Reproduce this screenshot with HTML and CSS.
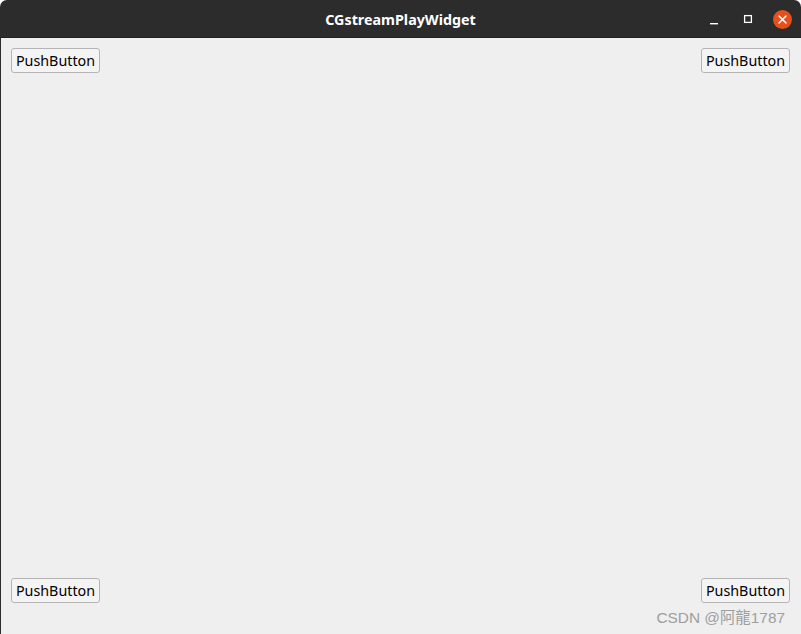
FILE: index.html
```html
<!DOCTYPE html>
<html>
<head>
<meta charset="utf-8">
<link rel="stylesheet" href="styles.css">
</head>
<body>
<div class="window">
  <div class="titlebar">
    <div class="title">CGstreamPlayWidget</div>
    <div class="controls">
      <span class="ctl min"><svg width="10" height="10" viewBox="0 0 10 10"><rect x="1" y="6" width="8" height="1.4" fill="#fff"/></svg></span>
      <span class="ctl max"><svg width="10" height="10" viewBox="0 0 10 10"><rect x="1.6" y="1.6" width="6.8" height="6.8" fill="none" stroke="#fff" stroke-width="1.3"/></svg></span>
      <span class="ctl close"><svg width="19" height="19" viewBox="0 0 19 19"><circle cx="9.5" cy="9.5" r="9.5" fill="#e5501c"/><path d="M6 6 L13 13 M13 6 L6 13" stroke="#fff" stroke-width="1.5" stroke-linecap="round"/></svg></span>
    </div>
  </div>
  <div class="content">
    <div class="row">
      <button class="push">PushButton</button>
      <button class="push">PushButton</button>
    </div>
    <div class="row">
      <button class="push">PushButton</button>
      <button class="push">PushButton</button>
    </div>
    <div class="watermark">CSDN @阿龍1787</div>
  </div>
</div>
</body>
</html>
```
FILE: styles.css
```css
html, body {
  margin: 0;
  padding: 0;
  background: #ffffff;
}
.window {
  width: 801px;
  height: 634px;
  display: flex;
  flex-direction: column;
  border-radius: 7px 7px 0 0;
  overflow: hidden;
  background: #efefef;
  font-family: "Noto Sans", "DejaVu Sans", sans-serif;
}
.titlebar {
  height: 38px;
  flex: none;
  background: #2c2c2c;
  border-bottom: 1px solid #222;
  box-sizing: border-box;
  display: flex;
  align-items: center;
  justify-content: center;
  position: relative;
}
.title {
  color: #ffffff;
  font-weight: bold;
  font-size: 14.3px;
  letter-spacing: 0;
  margin-top: 1px;
}
.controls {
  position: absolute;
  right: 9px;
  top: 10px;
  display: flex;
  align-items: center;
  gap: 0;
}
.ctl {
  display: flex;
  align-items: center;
  justify-content: center;
}
.ctl.min { width: 10px; height: 19px; margin-right: 24px; }
.ctl.min svg { margin-top: 5px; }
.ctl.max { width: 10px; height: 19px; margin-right: 20px; }
.ctl.max svg { margin-top: -1px; }
.ctl.close { width: 19px; height: 19px; }
.content {
  flex: 1;
  display: flex;
  flex-direction: column;
  justify-content: space-between;
  padding: 10px 11px 31px 11px;
  border-left: 1px solid #2c2c2c;
  position: relative;
}
.row {
  display: flex;
  justify-content: space-between;
}
.push {
  width: 89px;
  height: 25px;
  padding: 0;
  margin: 0;
  border: 1px solid #b4b4b4;
  border-radius: 3px;
  background: #f4f4f4;
  color: #000;
  font-family: "Noto Sans", "DejaVu Sans", sans-serif;
  font-size: 14.3px;
  line-height: 23px;
  margin-left: -1px;
}
.watermark {
  position: absolute;
  right: 16px;
  bottom: 7px;
  color: #9e9e9e;
  font-family: "Liberation Sans", "Noto Sans CJK SC", sans-serif;
  font-size: 15.4px;
  white-space: nowrap;
}
```
